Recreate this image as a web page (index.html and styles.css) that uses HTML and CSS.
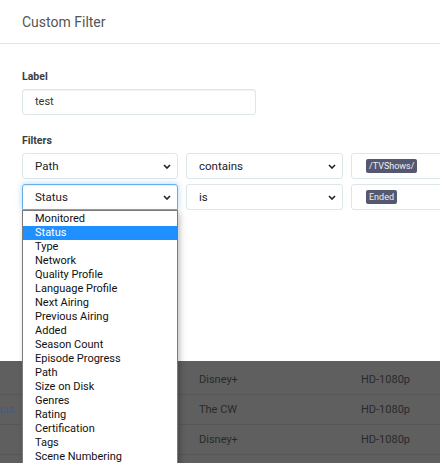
FILE: index.html
```html
<!DOCTYPE html>
<html>
<head>
<meta charset="utf-8">
<link rel="stylesheet" href="styles.css">
</head>
<body>
<div class="page">
  <div class="modal">
    <div class="modal-header">Custom Filter</div>
    <div class="modal-body">
      <div class="group-label">Label</div>
      <div class="text-input">test</div>
      <div class="group-label filters-label">Filters</div>
      <div class="filter-rows">
        <div class="filter-row">
          <div class="select">Path<svg class="chev" viewBox="0 0 8 5"><path d="M1 1 L4 4 L7 1" /></svg></div>
          <div class="select">contains<svg class="chev" viewBox="0 0 8 5"><path d="M1 1 L4 4 L7 1" /></svg></div>
          <div class="tag-input"><span class="tag">/TVShows/</span></div>
        </div>
        <div class="filter-row">
          <div class="select focused">Status<svg class="chev" viewBox="0 0 8 5"><path d="M1 1 L4 4 L7 1" /></svg>
            <ul class="dropdown">
              <li>Monitored</li>
              <li class="selected">Status</li>
              <li>Type</li>
              <li>Network</li>
              <li>Quality Profile</li>
              <li>Language Profile</li>
              <li>Next Airing</li>
              <li>Previous Airing</li>
              <li>Added</li>
              <li>Season Count</li>
              <li>Episode Progress</li>
              <li>Path</li>
              <li>Size on Disk</li>
              <li>Genres</li>
              <li>Rating</li>
              <li>Certification</li>
              <li>Tags</li>
              <li>Scene Numbering</li>
            </ul>
          </div>
          <div class="select">is<svg class="chev" viewBox="0 0 8 5"><path d="M1 1 L4 4 L7 1" /></svg></div>
          <div class="tag-input"><span class="tag">Ended</span></div>
        </div>
      </div>
    </div>
  </div>
  <div class="backdrop">
    <div class="row"><span class="c-title"></span><span class="c-net">Disney+</span><span class="c-qual">HD-1080p</span></div>
    <div class="row"><span class="c-title link">cis</span><span class="c-net">The CW</span><span class="c-qual">HD-1080p</span></div>
    <div class="row"><span class="c-title"></span><span class="c-net">Disney+</span><span class="c-qual">HD-1080p</span></div>
    <div class="row"><span class="c-title"></span><span class="c-net"></span><span class="c-qual"></span></div>
  </div>
</div>
</body>
</html>
```

FILE: styles.css
```css
html, body {
  margin: 0;
  padding: 0;
  background: #fff;
}
body {
  font-family: Roboto, "Liberation Sans", Arial, sans-serif;
  overflow: hidden;
  width: 440px;
  height: 463px;
}
.page {
  position: relative;
  width: 440px;
  height: 463px;
  overflow: hidden;
}
.modal {
  background: #fff;
  height: 361px;
}
.modal-header {
  height: 44px;
  box-sizing: border-box;
  border-bottom: 1px solid #e5e5e5;
  padding-left: 22px;
  font-size: 14px;
  line-height: 44px;
  color: #555;
}
.modal-body {
  padding: 26px 0 0 22px;
}
.group-label {
  font-size: 10.5px;
  font-weight: bold;
  color: #3c3c3c;
  line-height: 14px;
  margin-bottom: 5px;
}
.filters-label {
  margin-top: 19px;
  margin-bottom: 5px;
}
.text-input {
  width: 234px;
  height: 26px;
  box-sizing: border-box;
  border: 1px solid #dde6e9;
  border-radius: 3px;
  box-shadow: inset 0 1px 1px rgba(0,0,0,0.06);
  padding-left: 12px;
  font-size: 11px;
  line-height: 24px;
  color: #333;
}
.filter-rows {
  display: flex;
  flex-direction: column;
  gap: 5px;
}
.filter-row {
  display: flex;
  gap: 8px;
  width: 600px;
}
.select, .tag-input {
  position: relative;
  width: 157px;
  height: 26px;
  box-sizing: border-box;
  border: 1px solid #dde6e9;
  border-radius: 3px;
  padding-left: 12px;
  font-size: 11.5px;
  line-height: 24px;
  color: #222;
  flex: none;
}
.select:first-child {
  width: 156px;
}
.tag-input {
  width: 160px;
  padding-left: 14px;
}
.select.focused {
  border-color: #66afe9;
  box-shadow: inset 0 1px 1px rgba(0,0,0,0.075), 0 0 6px rgba(102,175,233,0.5);
  border-bottom-left-radius: 0;
  border-bottom-right-radius: 0;
}
.chev {
  position: absolute;
  right: 6px;
  top: 10px;
  width: 8px;
  height: 5px;
  fill: none;
  stroke: #222;
  stroke-width: 1.6;
}
.tag {
  display: inline-block;
  background: #545871;
  color: #eceef3;
  font-size: 9px;
  line-height: 14px;
  height: 14px;
  padding: 0 3px;
  border-radius: 2px;
  vertical-align: middle;
  position: relative;
  top: -1px;
}
.dropdown {
  position: absolute;
  left: -1px;
  top: 25px;
  width: 156px;
  margin: 0;
  padding: 1px 0 0 0;
  list-style: none;
  background: #fff;
  border: 1px solid #7a7a7a;
  box-sizing: border-box;
  box-shadow: 2px 3px 6px rgba(0,0,0,0.25);
  z-index: 10;
}
.dropdown li {
  height: 14px;
  line-height: 14px;
  padding-left: 12px;
  font-size: 11px;
  color: #111;
}
.dropdown li.selected {
  background: #1e90ff;
  color: #fff;
}
.backdrop {
  background: #5f5f5f;
  height: 102px;
  padding-top: 4px;
  box-sizing: border-box;
}
.row {
  display: flex;
  height: 30px;
  box-sizing: border-box;
  border-bottom: 1px solid #575757;
  font-size: 11px;
  line-height: 30px;
  color: #2a2a2a;
}
.c-title {
  width: 199px;
  flex: none;
}
.c-title.link {
  color: #3d5d82;
}
.c-net {
  width: 162px;
  flex: none;
}
.c-qual {
  flex: none;
}
```
